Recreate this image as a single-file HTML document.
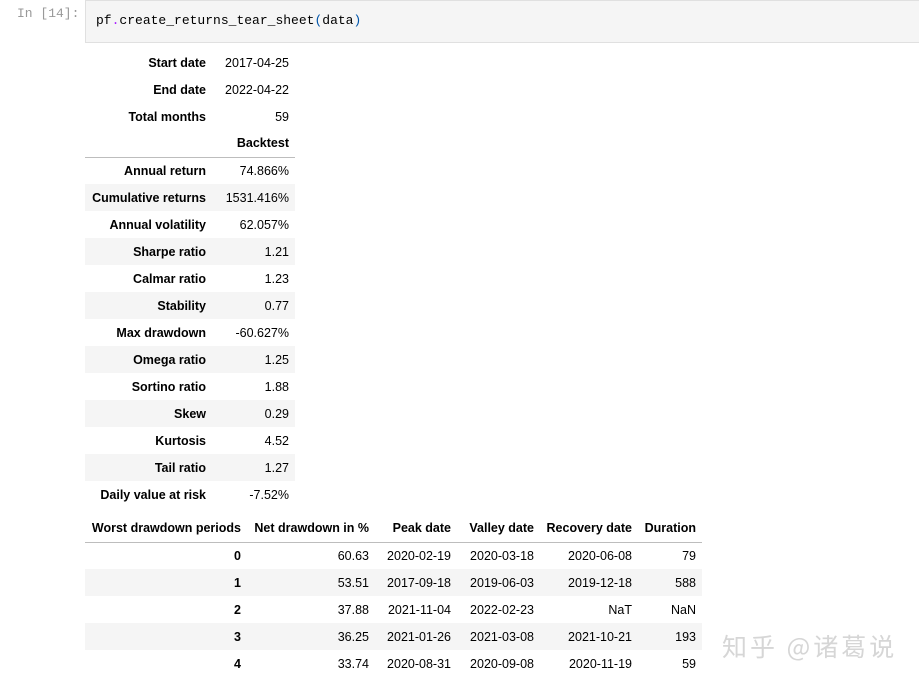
<!DOCTYPE html>
<html><head><meta charset="utf-8"><style>
body{margin:0;width:919px;height:683px;background:#fff;position:relative;overflow:hidden;font-family:"Liberation Sans",Arial,sans-serif;font-size:12.5px;color:#000}
.prompt{position:absolute;left:17px;top:6px;font-family:"Liberation Mono",monospace;font-size:13px;color:#999}
.cell{position:absolute;left:85px;top:0;width:840px;height:43px;background:#f5f5f5;border:1px solid #e0e0e0;box-sizing:border-box}
.code{position:absolute;left:96px;top:13px;font-family:"Liberation Mono",monospace;font-size:13px;color:#000}
table{position:absolute;border-collapse:collapse;table-layout:fixed}
td,th{height:27px;padding:0 6px;text-align:right;white-space:nowrap;box-sizing:border-box}
th{font-weight:bold}
tr.g td,tr.g th{background:#f5f5f5}
tr.line th,tr.line td{border-bottom:1px solid #bdbdbd}
.wm{position:absolute;left:722px;top:628px;font-family:"Noto Sans CJK SC",sans-serif;font-size:25px;color:#d6d6d6;letter-spacing:3px}
</style></head><body>
<div class="prompt">In [14]:</div>
<div class="cell"></div>
<div class="code">pf<span style="color:#a2f">.</span>create_returns_tear_sheet<span style="color:#05a">(</span>data<span style="color:#05a">)</span></div>
<table style="left:85px;top:49px;width:210px">
<colgroup><col style="width:127px"><col style="width:83px"></colgroup>
<tr><th>Start date</th><td>2017-04-25</td></tr>
<tr><th>End date</th><td>2022-04-22</td></tr>
<tr><th>Total months</th><td>59</td></tr>
<tr class="line"><th></th><th>Backtest</th></tr>
<tr><th>Annual return</th><td>74.866%</td></tr>
<tr class="g"><th>Cumulative returns</th><td>1531.416%</td></tr>
<tr><th>Annual volatility</th><td>62.057%</td></tr>
<tr class="g"><th>Sharpe ratio</th><td>1.21</td></tr>
<tr><th>Calmar ratio</th><td>1.23</td></tr>
<tr class="g"><th>Stability</th><td>0.77</td></tr>
<tr><th>Max drawdown</th><td>-60.627%</td></tr>
<tr class="g"><th>Omega ratio</th><td>1.25</td></tr>
<tr><th>Sortino ratio</th><td>1.88</td></tr>
<tr class="g"><th>Skew</th><td>0.29</td></tr>
<tr><th>Kurtosis</th><td>4.52</td></tr>
<tr class="g"><th>Tail ratio</th><td>1.27</td></tr>
<tr><th>Daily value at risk</th><td>-7.52%</td></tr>
</table>
<table style="left:85px;top:515px;width:617px">
<colgroup><col style="width:162px"><col style="width:128px"><col style="width:82px"><col style="width:83px"><col style="width:98px"><col style="width:64px"></colgroup>
<tr class="line"><th>Worst drawdown periods</th><th>Net drawdown in %</th><th>Peak date</th><th>Valley date</th><th>Recovery date</th><th>Duration</th></tr>
<tr><th>0</th><td>60.63</td><td>2020-02-19</td><td>2020-03-18</td><td>2020-06-08</td><td>79</td></tr>
<tr class="g"><th>1</th><td>53.51</td><td>2017-09-18</td><td>2019-06-03</td><td>2019-12-18</td><td>588</td></tr>
<tr><th>2</th><td>37.88</td><td>2021-11-04</td><td>2022-02-23</td><td>NaT</td><td>NaN</td></tr>
<tr class="g"><th>3</th><td>36.25</td><td>2021-01-26</td><td>2021-03-08</td><td>2021-10-21</td><td>193</td></tr>
<tr><th>4</th><td>33.74</td><td>2020-08-31</td><td>2020-09-08</td><td>2020-11-19</td><td>59</td></tr>
</table>
<div class="wm">知乎 @诸葛说</div>
</body></html>
